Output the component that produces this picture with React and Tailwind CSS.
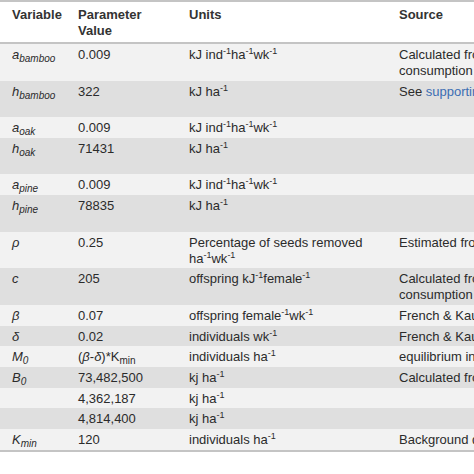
import React from "react";

const Sub = ({ children }) => (
  <span className="relative top-[3px] text-[10px] italic">{children}</span>
);

const Sup = ({ children }) => (
  <span className="relative -top-[5px] text-[9px]">{children}</span>
);

const V = ({ sym, sub }) => (
  <span>
    <i>{sym}</i>
    {sub && <Sub>{sub}</Sub>}
  </span>
);

const rows = [
  {
    v: <V sym="a" sub="bamboo" />,
    p: "0.009",
    u: <>kJ ind<Sup>-1</Sup>ha<Sup>-1</Sup>wk<Sup>-1</Sup></>,
    s: <>Calculated from daily<br />consumption rates</>,
    h: "h-[37px]",
  },
  {
    v: <V sym="h" sub="bamboo" />,
    p: "322",
    u: <>kJ ha<Sup>-1</Sup></>,
    s: <>See <span className="text-[#3b6db3]">supporting information</span></>,
    h: "h-[36px]",
  },
  {
    v: <V sym="a" sub="oak" />,
    p: "0.009",
    u: <>kJ ind<Sup>-1</Sup>ha<Sup>-1</Sup>wk<Sup>-1</Sup></>,
    s: "",
    h: "h-[21px]",
  },
  {
    v: <V sym="h" sub="oak" />,
    p: "71431",
    u: <>kJ ha<Sup>-1</Sup></>,
    s: "",
    h: "h-[36px]",
  },
  {
    v: <V sym="a" sub="pine" />,
    p: "0.009",
    u: <>kJ ind<Sup>-1</Sup>ha<Sup>-1</Sup>wk<Sup>-1</Sup></>,
    s: "",
    h: "h-[21px]",
  },
  {
    v: <V sym="h" sub="pine" />,
    p: "78835",
    u: <>kJ ha<Sup>-1</Sup></>,
    s: "",
    h: "h-[37px]",
  },
  {
    v: <V sym="ρ" />,
    p: "0.25",
    u: <>Percentage of seeds removed<br />ha<Sup>-1</Sup>wk<Sup>-1</Sup></>,
    s: "Estimated from field trials",
    h: "h-[36px]",
  },
  {
    v: <V sym="c" />,
    p: "205",
    u: <>offspring kJ<Sup>-1</Sup>female<Sup>-1</Sup></>,
    s: <>Calculated from daily<br />consumption rates</>,
    h: "h-[37px]",
  },
  {
    v: <V sym="β" />,
    p: "0.07",
    u: <>offspring female<Sup>-1</Sup>wk<Sup>-1</Sup></>,
    s: "French & Kaufman 1975",
    h: "h-[21px]",
  },
  {
    v: <V sym="δ" />,
    p: "0.02",
    u: <>individuals wk<Sup>-1</Sup></>,
    s: "French & Kaufman 1975",
    h: "h-[20px]",
  },
  {
    v: <V sym="M" sub="0" />,
    p: <>(<i>β</i>-<i>δ</i>)*K<span className="relative top-[3px] text-[10px]">min</span></>,
    u: <>individuals ha<Sup>-1</Sup></>,
    s: "equilibrium in absence",
    h: "h-[21px]",
  },
  {
    v: <V sym="B" sub="0" />,
    p: "73,482,500",
    u: <>kj ha<Sup>-1</Sup></>,
    s: "Calculated from",
    h: "h-[21px]",
  },
  {
    v: null,
    p: "4,362,187",
    u: <>kj ha<Sup>-1</Sup></>,
    s: "",
    h: "h-[20px]",
  },
  {
    v: null,
    p: "4,814,400",
    u: <>kj ha<Sup>-1</Sup></>,
    s: "",
    h: "h-[21px]",
  },
  {
    v: <V sym="K" sub="min" />,
    p: "120",
    u: <>individuals ha<Sup>-1</Sup></>,
    s: "Background density",
    h: "h-[21px]",
  },
];

export default function App() {
  return (
    <div className="w-[474px] h-[474px] overflow-hidden bg-white">
      <div
        className="w-[600px] text-[13px] leading-[16px] text-[#2b2b2b]"
        style={{ fontFamily: '"Liberation Sans", Arial, sans-serif' }}
      >
        {/* header */}
        <div className="flex h-[44px] border-t-2 border-b-2 border-[#c4c4c4] bg-white pt-[5px] font-bold text-[#333]">
          <div className="w-[78px] pl-[12px]">Variable</div>
          <div className="w-[111px]">
            Parameter
            <br />
            Value
          </div>
          <div className="w-[210px]">Units</div>
          <div className="flex-1">Source</div>
        </div>
        {rows.map((r, i) => (
          <div
            key={i}
            className={`flex ${r.h} pt-[3px] whitespace-nowrap ${
              i % 2 === 0 ? "bg-[#f2f2f2]" : "bg-[#dfdfdf]"
            }`}
          >
            <div className="w-[78px] pl-[12px]">{r.v}</div>
            <div className="w-[111px]">{r.p}</div>
            <div className="w-[210px]">{r.u}</div>
            <div className="flex-1">{r.s}</div>
          </div>
        ))}
        <div className="h-[2px] bg-[#c4c4c4]" />
      </div>
    </div>
  );
}
